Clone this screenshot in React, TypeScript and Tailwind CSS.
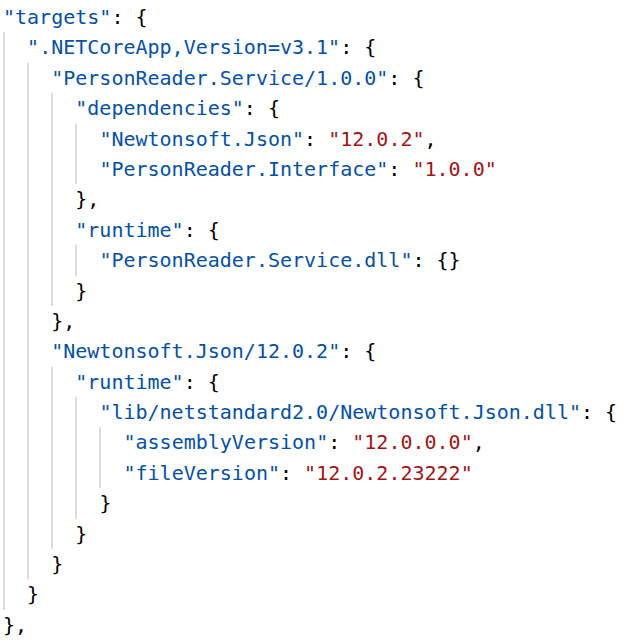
import React from 'react';

type Tok = { t: string; c?: 'k' | 's' };
type Line = { lvl: number; toks: Tok[] };

const k = (t: string): Tok => ({ t, c: 'k' });
const s = (t: string): Tok => ({ t, c: 's' });
const p = (t: string): Tok => ({ t });

const lines: Line[] = [
  { lvl: 0, toks: [k('"targets"'), p(': {')] },
  { lvl: 1, toks: [k('".NETCoreApp,Version=v3.1"'), p(': {')] },
  { lvl: 2, toks: [k('"PersonReader.Service/1.0.0"'), p(': {')] },
  { lvl: 3, toks: [k('"dependencies"'), p(': {')] },
  { lvl: 4, toks: [k('"Newtonsoft.Json"'), p(': '), s('"12.0.2"'), p(',')] },
  { lvl: 4, toks: [k('"PersonReader.Interface"'), p(': '), s('"1.0.0"')] },
  { lvl: 3, toks: [p('},')] },
  { lvl: 3, toks: [k('"runtime"'), p(': {')] },
  { lvl: 4, toks: [k('"PersonReader.Service.dll"'), p(': {}')] },
  { lvl: 3, toks: [p('}')] },
  { lvl: 2, toks: [p('},')] },
  { lvl: 2, toks: [k('"Newtonsoft.Json/12.0.2"'), p(': {')] },
  { lvl: 3, toks: [k('"runtime"'), p(': {')] },
  { lvl: 4, toks: [k('"lib/netstandard2.0/Newtonsoft.Json.dll"'), p(': {')] },
  { lvl: 5, toks: [k('"assemblyVersion"'), p(': '), s('"12.0.0.0"'), p(',')] },
  { lvl: 5, toks: [k('"fileVersion"'), p(': '), s('"12.0.2.23222"')] },
  { lvl: 4, toks: [p('}')] },
  { lvl: 3, toks: [p('}')] },
  { lvl: 2, toks: [p('}')] },
  { lvl: 1, toks: [p('}')] },
  { lvl: 0, toks: [p('},')] },
];

function CodeLine({ line }: { line: Line }) {
  return (
    <div className="flex h-[30.4px] items-stretch whitespace-pre">
      {Array.from({ length: line.lvl }).map((_, i) => (
        <span key={i} className="w-[24.1px] shrink-0 border-l-2 border-[#dcdcdc]" />
      ))}
      <span className="leading-[30.4px]">
        {line.toks.map((tok, i) => (
          <span
            key={i}
            className={
              tok.c === 'k'
                ? 'text-[#0451a5]'
                : tok.c === 's'
                ? 'text-[#a31515]'
                : 'text-black'
            }
          >
            {tok.t}
          </span>
        ))}
      </span>
    </div>
  );
}

export default function App() {
  return (
    <div className="w-[626px] h-[640px] overflow-hidden bg-white">
      <div className="pl-[3px] pt-[2px] font-['DejaVu_Sans_Mono','Liberation_Mono',monospace] text-[20px]">
        {lines.map((line, i) => (
          <CodeLine key={i} line={line} />
        ))}
      </div>
    </div>
  );
}
